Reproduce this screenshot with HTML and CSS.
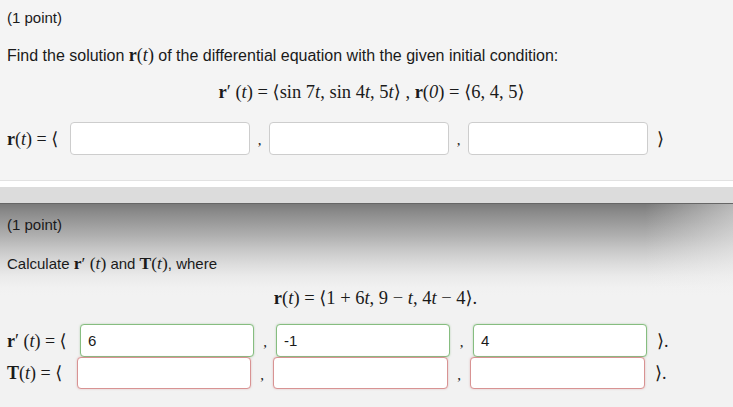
FILE: index.html
```html
<!DOCTYPE html>
<html>
<head>
<meta charset="utf-8">
<link rel="stylesheet" href="styles.css">
</head>
<body>
<div class="panel top">
  <div class="pts">(1 point)</div>
  <p class="q">Find the solution <span class="m mi"><b>r</b>(<i>t</i>)</span> of the differential equation with the given initial condition:</p>
  <div class="eq eq1"><span class="m"><b>r</b>′ (<i>t</i>) = <span class="ang">⟨</span>sin 7<i>t</i>, sin 4<i>t</i>, 5<i>t</i><span class="ang">⟩</span> , <b>r</b>(<i>0</i>) = <span class="ang">⟨</span>6, 4, 5<span class="ang">⟩</span></span></div>
  <div class="row row-a">
    <span class="lbl m"><b>r</b>(<i>t</i>) = <span class="ang">⟨</span></span>
    <span class="box w180"></span><span class="sep">,</span>
    <span class="box w180"></span><span class="sep">,</span>
    <span class="box w180"></span>
    <span class="cls m"><span class="ang">⟩</span></span>
  </div>
</div>
<div class="divider"><div class="white"></div><div class="grey"></div></div>
<div class="panel bottom">
  <div class="pts pts2">(1 point)</div>
  <p class="q q2">Calculate <span class="m mi2"><b>r</b>′ (<i>t</i>)</span> and <span class="m mi2"><b>T</b>(<i>t</i>)</span>, where</p>
  <div class="eq eq2"><span class="m"><b>r</b>(<i>t</i>) = <span class="ang">⟨</span>1 + 6<i>t</i>, 9 − <i>t</i>, 4<i>t</i> − 4<span class="ang">⟩</span>.</span></div>
  <div class="row row-b">
    <span class="lbl m lb1"><b>r</b>′ (<i>t</i>) = <span class="ang">⟨</span></span>
    <span class="box ok">6</span><span class="sep s2">,</span>
    <span class="box ok">-1</span><span class="sep s3">,</span>
    <span class="box ok">4</span>
    <span class="cls m"><span class="ang">⟩</span>.</span>
  </div>
  <div class="row row-c">
    <span class="lbl m lb2"><b>T</b>(<i>t</i>) = <span class="ang">⟨</span></span>
    <span class="box bad"></span><span class="sep s2">,</span>
    <span class="box bad w175"></span><span class="sep s4">,</span>
    <span class="box bad w175"></span>
    <span class="cls m"><span class="ang">⟩</span>.</span>
  </div>
</div>
</body>
</html>
```
FILE: styles.css
```css
html, body {
  margin: 0;
  padding: 0;
  background: #f2f2f2;
  width: 733px;
  height: 407px;
  overflow: hidden;
  font-family: "Liberation Sans", Arial, sans-serif;
  font-size: 15px;
  color: #1a1a1a;
}
.panel {
  padding: 0 7px;
}
.top {
  background: #f4f4f4;
  height: 181px;
  box-sizing: border-box;
  padding-top: 10px;
  border-bottom: 1px solid #e2e2e2;
}
.pts {
  line-height: 16px;
  font-size: 15px;
}
.q {
  margin: 21px 0 0;
  line-height: 16px;
  font-size: 16px;
}
.m {
  font-family: "Liberation Serif", "DejaVu Serif", serif;
  font-size: 16px;
}
.mi { font-size: 18px; }
.mi2 { font-size: 17.5px; }
.m b { font-weight: bold; }
.m i { font-style: italic; }
.ang {
  font-family: "DejaVu Serif", serif;
  font-size: 16px;
}
.eq {
  text-align: center;
  line-height: 20px;
}
.eq .m { font-size: 18.5px; }
.eq .ang { font-size: 18px; }
.eq1 {
  margin-top: 18px;
  padding-left: 10px;
}
.row {
  display: flex;
  align-items: center;
}
.row-a {
  margin-top: 19px;
}
.lbl {
  width: 63px;
  white-space: nowrap;
  font-size: 18px;
}
.lbl .ang, .cls .ang { font-size: 18px; }
.cls { font-size: 18px; }
.box {
  box-sizing: border-box;
  width: 174px;
  height: 33px;
  background: #fff;
  border: 1px solid #cdcdcd;
  border-radius: 4px;
  font-family: "Liberation Sans", Arial, sans-serif;
  font-size: 15px;
  line-height: 31px;
  padding-left: 7px;
}
.w180 { width: 180px; }
.w175 { width: 175px; }
.sep {
  width: 19px;
  text-align: center;
  font-family: "Liberation Serif", serif;
  font-size: 15px;
  padding-top: 4px;
}
.cls {
  margin-left: 9px;
  white-space: nowrap;
}
.divider .white {
  height: 6px;
  background: #ffffff;
}
.divider .grey {
  height: 16px;
  background: #dcdcdc;
}
.bottom {
  height: 203px;
  box-sizing: border-box;
  padding-top: 13px;
  background:
    linear-gradient(to right, rgba(242,242,242,0) 88%, rgba(242,242,242,0.5) 100%),
    linear-gradient(to bottom, #7a7a7a 0px, #8a8a8a 8px, #9a9a9a 18px, #b0b0b0 32px, #c8c8c8 46px, #dcdcdc 60px, #eaeaea 72px, #f1f1f1 84px, #f2f2f2 92px);
  background-repeat: no-repeat;
  background-size: 100% 90px, 100% 100%;
  border-top: 1px solid #666;
}
.pts2 { line-height: 16px; }
.q2 { margin-top: 22px; font-size: 15px; }
.eq2 {
  margin-top: 16px;
  padding-left: 18px;
}
.row-b { margin-top: 15px; }
.row-c { margin-top: 0px; }
.lb1 { width: 73px; }
.lb2 { width: 70px; }
.row-c .box { height: 32px; }
.ok {
  border-color: #86bd80;
  box-shadow: 0 0 2px rgba(120,180,110,0.5);
}
.bad {
  border-color: #d89393;
  box-shadow: 0 0 2px rgba(210,130,130,0.5);
}
.s2 { width: 22px; }
.s3 { width: 23px; }
.s4 { width: 22px; }
.row-b .cls, .row-c .cls { margin-left: 10px; }
```
